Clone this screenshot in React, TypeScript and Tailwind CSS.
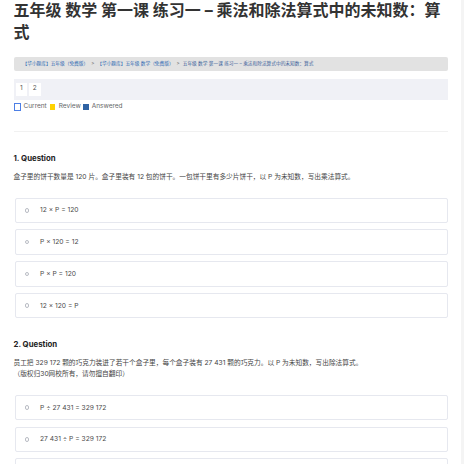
import React from 'react';

const FONT = "font-['Inter','Noto_Sans_CJK_SC',sans-serif]";

const QUESTIONS = [
  {
    title: '1. Question',
    text: ['盒子里的饼干数量是 120 片。盒子里装有 12 包的饼干。一包饼干里有多少片饼干，以 P 为未知数，写出乘法算式。'],
    options: ['12 × P = 120', 'P × 120 = 12', 'P × P = 120', '12 × 120 = P'],
  },
  {
    title: '2. Question',
    text: [
      '员工把 329 172 颗的巧克力装进了若干个盒子里，每个盒子装有 27 431 颗的巧克力。以 P 为未知数，写出除法算式。',
      '（版权归30网校所有，请勿擅自翻印）',
    ],
    options: ['P ÷ 27 431 = 329 172', '27 431 ÷ P = 329 172', '329 172 ÷ P = 27 431'],
  },
];

function Option({ label }: { label: string }) {
  return (
    <div className="flex h-[25.5px] items-center rounded-[2px] border border-[#e6e8ef] bg-white pl-[8.5px]">
      <span className="h-[4.5px] w-[4.5px] rounded-full border-[0.7px] border-[#b9bcc4]" />
      <span className="ml-[11px] text-[6.7px] text-[#4a4a4a]">{label}</span>
    </div>
  );
}

export default function App() {
  return (
    <div className={`relative h-[464px] w-[464px] overflow-hidden bg-white ${FONT}`}>
      <div className="absolute right-0 top-0 h-full w-[3px] bg-[#f4f4f4]" />
      <div className="w-[448px] pl-[13.5px]">
        <h1 className="mt-[-1.5px] text-[16px] font-bold leading-[22px] text-[#333]">
          五年级 数学 第一课 练习一 – 乘法和除法算式中的未知数：算式
        </h1>

        <div className="mt-[14.5px] flex h-[14px] items-center gap-[3px] rounded-[2px] bg-[#e2e2e2] pl-[9px] text-[4.7px] text-[#2f6bb3]">
          <span>【华小题库】五年级（免费版）</span>
          <span className="text-[#777]">&gt;</span>
          <span>【华小题库】五年级 数学（免费版）</span>
          <span className="text-[#777]">&gt;</span>
          <span className="text-[#3a5f9a]">五年级 数学 第一课 练习一 – 乘法和除法算式中的未知数：算式</span>
        </div>

        <div className="mt-[8px] flex h-[20.5px] items-center gap-[2px] bg-[#f0f1f6] px-[2px]">
          <span className="flex h-[13.5px] w-[11.5px] items-center justify-center bg-white text-[6.5px] text-[#555]">1</span>
          <span className="flex h-[13.5px] w-[11.5px] items-center justify-center bg-white text-[6.5px] text-[#555]">2</span>
        </div>

        <div className="mt-[3.5px] flex h-[8px] items-center text-[6.5px] text-[#666]">
          <span className="h-[7.5px] w-[7.5px] border border-[#4d7fe6] bg-white" />
          <span className="ml-[2.5px]">Current</span>
          <span className="ml-[3px] h-[5.5px] w-[5.5px] bg-[#ffd200]" />
          <span className="ml-[3.5px]">Review</span>
          <span className="ml-[2.5px] h-[5.5px] w-[5.5px] bg-[#2e62a3]" />
          <span className="ml-[3px]">Answered</span>
        </div>

        <div className="mt-[20px] border-t border-[#f1f1f1]" />

        {QUESTIONS.map((q) => (
          <div key={q.title} className="pt-[16px] first-of-type:pt-0">
            <div className="mt-[5px] text-[7.8px] font-bold leading-[11px] text-[#222]">{q.title}</div>
            <div className="mt-[8px] text-[6.7px] leading-[11px] text-[#444]">
              {q.text.map((t) => (
                <div key={t}>{t}</div>
              ))}
            </div>
            <div className="mt-[14.5px] flex flex-col gap-[6.3px] pl-[1.5px]">
              {q.options.map((o) => (
                <Option key={o} label={o} />
              ))}
            </div>
          </div>
        ))}
      </div>
    </div>
  );
}
